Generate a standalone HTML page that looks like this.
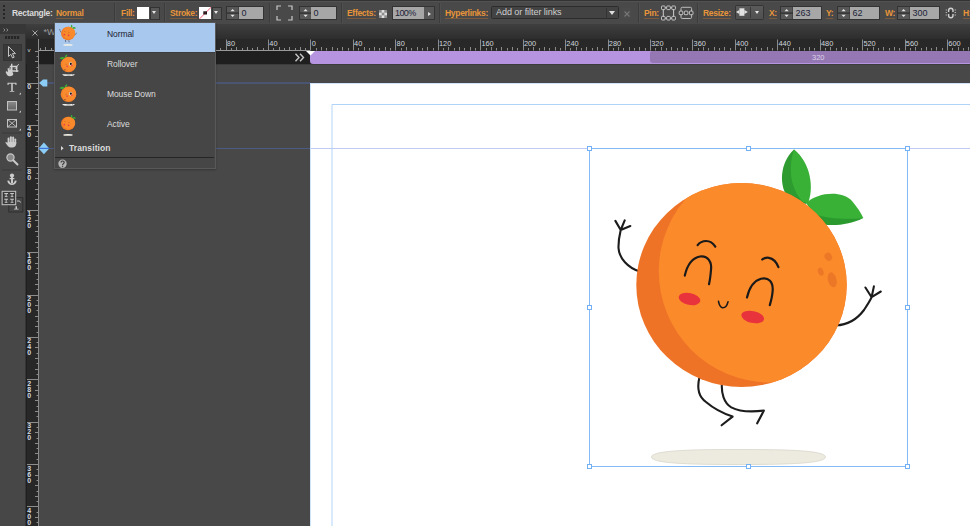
<!DOCTYPE html>
<html><head><meta charset="utf-8">
<style>
*{margin:0;padding:0;box-sizing:border-box}
html,body{width:970px;height:526px;overflow:hidden;background:#484848;font-family:"Liberation Sans",sans-serif;position:relative}
.a{position:absolute}
.lbl{position:absolute;font-size:8.5px;font-weight:bold;color:#e8953a;top:7.9px;line-height:10px;white-space:nowrap;letter-spacing:-0.3px}
.lbl u{text-decoration:underline solid rgba(190,115,45,0.42);text-decoration-thickness:1px;text-underline-offset:1.5px}
.sep{position:absolute;top:3px;width:2px;height:20px;background:linear-gradient(90deg,#3c3c3c 50%,#4f4f4f 50%)}
.spin{position:absolute;top:7px;width:12px;height:13px;background:#3e3e3e;border:1px solid #303030}
.spin:before{content:"";position:absolute;left:2px;top:1.5px;border-left:3.5px solid transparent;border-right:3.5px solid transparent;border-bottom:3.5px solid #d0d0d0}
.spin:after{content:"";position:absolute;left:2px;top:6.5px;border-left:3.5px solid transparent;border-right:3.5px solid transparent;border-top:3.5px solid #d0d0d0}
.inp{position:absolute;top:6px;height:14px;background:#a7a7a7;color:#1c2338;font-size:9px;line-height:12px;padding-left:2.5px;border:1px solid #333;border-left:0}
.dd{position:absolute;top:6px;height:14px;background:#575757;border:1px solid #333}
.dd:after{content:"";position:absolute;left:1.6px;top:3.6px;border-left:2.5px solid transparent;border-right:2.5px solid transparent;border-top:3.7px solid #e6e6e6}
.rt{position:absolute;font-size:7.4px;color:#cfd5dc;line-height:8px;top:40px}
.mi{position:absolute;left:107px;font-size:8.5px;color:#dcdcdc;line-height:10px;letter-spacing:-0.1px}
</style></head><body>

<!-- toolbar -->
<div class="a" style="left:0;top:0;width:970px;height:24px;background:#494949;border-top:1px solid #333"></div><div class="a" style="left:0;top:1px;width:970px;height:1px;background:#525252"></div>
<div class="a" style="left:3px;top:5px;width:2px;height:14px;border-left:2px dotted #262626"></div>
<div class="lbl" style="left:12px;color:#dadada">Rectangle:</div>
<div class="lbl" style="left:56px"><u>Normal</u></div>
<div class="sep" style="left:114px"></div>
<div class="lbl" style="left:121px"><u>Fill:</u></div>
<div class="a" style="left:136.7px;top:6.8px;width:12.4px;height:12.4px;background:#fff"></div>
<div class="dd" style="left:149.5px;top:6.5px;width:10px;height:13px"></div>
<div class="sep" style="left:164px"></div>
<div class="lbl" style="left:170px"><u>Stroke:</u></div>
<div class="a" style="left:199px;top:6.8px;width:12.3px;height:12.4px;background:#fff;overflow:hidden"><svg width="12" height="12" style="position:absolute;left:0;top:0"><line x1="0" y1="12.4" x2="12.4" y2="0" stroke="#f04a60" stroke-width="0.9"/><rect x="4.3" y="4.3" width="3.7" height="3.2" fill="#1a1a1a"/><rect x="5.5" y="5.3" width="1.4" height="1.2" fill="#7a1a2a"/></svg></div>
<div class="dd" style="left:211.5px;top:6.5px;width:10px;height:13px"></div>
<svg class="a" style="left:226px;top:6px" width="13" height="14"><rect width="13" height="14" fill="#333"/><rect x="1" y="1" width="11.5" height="5.4" fill="#585858"/><rect x="1" y="7.8" width="11.5" height="5.2" fill="#585858"/><path d="M4.5 5.3L6.6 3L8.7 5.3ZM4.5 8.8L6.6 11.1L8.7 8.8Z" fill="#e6e6e6"/></svg>
<div class="inp" style="left:239px;width:25px">0</div>
<div class="sep" style="left:269px"></div>
<svg class="a" style="left:276px;top:5px" width="17" height="16"><g fill="none" stroke="#c8c8c8" stroke-width="1.2"><path d="M1 5V1H5M12 1H16V5M16 11V15H12M5 15H1V11"/></g></svg>
<svg class="a" style="left:299px;top:6px" width="13" height="14"><rect width="13" height="14" fill="#333"/><rect x="1" y="1" width="11.5" height="5.4" fill="#585858"/><rect x="1" y="7.8" width="11.5" height="5.2" fill="#585858"/><path d="M4.5 5.3L6.6 3L8.7 5.3ZM4.5 8.8L6.6 11.1L8.7 8.8Z" fill="#e6e6e6"/></svg>
<div class="inp" style="left:311px;width:26px">0</div>
<div class="sep" style="left:341px"></div>
<div class="lbl" style="left:347px"><u>Effects:</u></div>
<svg class="a" style="left:379px;top:10px" width="8" height="8"><rect width="8" height="8" fill="#dedede"/><g fill="#8c8c8c"><rect x="0" y="0" width="2.7" height="2.7"/><rect x="5.3" y="0" width="2.7" height="2.7"/><rect x="2.7" y="2.7" width="2.7" height="2.7"/><rect x="0" y="5.3" width="2.7" height="2.7"/><rect x="5.3" y="5.3" width="2.7" height="2.7"/></g></svg>
<div class="inp" style="left:393px;width:31px;padding-left:2px;letter-spacing:-0.6px;border-right:0">100%</div>
<div class="a" style="left:424px;top:6px;width:11px;height:14px;background:#575757;border:1px solid #333;border-left:0"><div class="a" style="left:3.5px;top:4.5px;border-top:2px solid transparent;border-bottom:2px solid transparent;border-left:3.5px solid #e0e0e0"></div></div>
<div class="a" style="left:392px;top:6px;width:1px;height:14px;background:#333"></div>
<div class="sep" style="left:439px"></div>
<div class="lbl" style="left:445px"><u>Hyperlinks:</u></div>
<div class="a" style="left:491px;top:6.2px;width:127.5px;height:13.2px;background:#434343;border:1px solid #2c2c2c;border-radius:1.5px;color:#cfcfcf;font-size:9px;line-height:11px;padding-left:4px;letter-spacing:-0.05px">Add or filter links</div>
<div class="a" style="left:606px;top:8px;width:1px;height:11px;background:#333"></div>
<div class="a" style="left:609px;top:11px;border-left:3px solid transparent;border-right:3px solid transparent;border-top:4px solid #e0e0e0"></div>
<div class="a" style="left:622px;top:8px;width:9px;height:10px;background:#4b4b4b"></div><svg class="a" style="left:624px;top:10.5px" width="6" height="6"><path d="M0.5 0.5L5.5 5.5M5.5 0.5L0.5 5.5" stroke="#777" stroke-width="1.1"/></svg>
<div class="sep" style="left:638px"></div>
<div class="lbl" style="left:644px"><u>Pin:</u></div>
<svg class="a" style="left:660px;top:5px" width="17" height="16"><g fill="none" stroke="#cdcdcd" stroke-width="1"><path d="M3.3 4.5V11.5M13.6 4.5V11.5M5 2.8H6.8M10.3 2.8H12M5 13.2H6.8M10.3 13.2H12"/></g><g fill="#424242" stroke="#d2d2d2" stroke-width="0.9"><rect x="1.5" y="1" width="3.6" height="3.6" rx="0.8"/><rect x="6.7" y="1" width="3.6" height="3.6" rx="0.8"/><rect x="11.8" y="1" width="3.6" height="3.6" rx="0.8"/><rect x="1.5" y="11.4" width="3.6" height="3.6" rx="0.8"/><rect x="6.7" y="11.4" width="3.6" height="3.6" rx="0.8"/><rect x="11.8" y="11.4" width="3.6" height="3.6" rx="0.8"/></g></svg>
<svg class="a" style="left:678px;top:5px" width="17" height="16"><rect x="3" y="2.3" width="10.6" height="11.2" rx="1.2" fill="none" stroke="#bcbcbc" stroke-width="1"/><g fill="#424242" stroke="#d2d2d2" stroke-width="0.9"><rect x="1.2" y="6.1" width="3.6" height="3.6" rx="0.8"/><rect x="6.3" y="6.1" width="3.6" height="3.6" rx="0.8"/><rect x="11.4" y="6.1" width="3.6" height="3.6" rx="0.8"/></g></svg>
<div class="sep" style="left:697px"></div>
<div class="lbl" style="left:703px"><u>Resize:</u></div>
<div class="a" style="left:734.5px;top:5.3px;width:29px;height:15px;background:linear-gradient(#5a5a5a,#505050);border:1px solid #343434;border-radius:1.5px"></div>
<div class="a" style="left:750px;top:7px;width:1px;height:11px;background:#3a3a3a"></div>
<svg class="a" style="left:735px;top:8px" width="14" height="9"><g fill="#e2e2e2"><rect x="4.4" y="0.3" width="5" height="7.5"/><path d="M1 4.1L4.4 2.1V6.1Z"/><path d="M12.8 4.1L9.4 2.1V6.1Z"/></g></svg>
<div class="a" style="left:754.5px;top:10.8px;border-left:2.5px solid transparent;border-right:2.5px solid transparent;border-top:3.7px solid #e6e6e6"></div>
<div class="lbl" style="left:769px"><u>X:</u></div>
<svg class="a" style="left:780px;top:6px" width="13" height="14"><rect width="13" height="14" fill="#333"/><rect x="1" y="1" width="11.5" height="5.4" fill="#585858"/><rect x="1" y="7.8" width="11.5" height="5.2" fill="#585858"/><path d="M4.5 5.3L6.6 3L8.7 5.3ZM4.5 8.8L6.6 11.1L8.7 8.8Z" fill="#e6e6e6"/></svg>
<div class="inp" style="left:793px;width:29px">263</div>
<div class="lbl" style="left:826px"><u>Y:</u></div>
<svg class="a" style="left:837px;top:6px" width="13" height="14"><rect width="13" height="14" fill="#333"/><rect x="1" y="1" width="11.5" height="5.4" fill="#585858"/><rect x="1" y="7.8" width="11.5" height="5.2" fill="#585858"/><path d="M4.5 5.3L6.6 3L8.7 5.3ZM4.5 8.8L6.6 11.1L8.7 8.8Z" fill="#e6e6e6"/></svg>
<div class="inp" style="left:850px;width:30px">62</div>
<div class="lbl" style="left:885px"><u>W:</u></div>
<svg class="a" style="left:897px;top:6px" width="13" height="14"><rect width="13" height="14" fill="#333"/><rect x="1" y="1" width="11.5" height="5.4" fill="#585858"/><rect x="1" y="7.8" width="11.5" height="5.2" fill="#585858"/><path d="M4.5 5.3L6.6 3L8.7 5.3ZM4.5 8.8L6.6 11.1L8.7 8.8Z" fill="#e6e6e6"/></svg>
<div class="inp" style="left:910px;width:30px">300</div>
<svg class="a" style="left:944px;top:6px" width="13" height="14"><g fill="none" stroke="#cfcfcf" stroke-width="1.4"><path d="M4.6 6V4.5C4.6 3 5.3 2.3 6.8 2.3C8.3 2.3 9 3 9 4.5V6M4.6 8V9.5C4.6 11 5.3 11.7 6.8 11.7C8.3 11.7 9 11 9 9.5V8"/></g><path d="M6.8 4.5V9.5" stroke="#2a2a2a" stroke-width="1"/><g stroke="#bdbdbd" stroke-width="0.9"><path d="M1.7 4H3M1.7 6.5H3M1.7 9H3M10.6 4H12M10.6 6.5H12M10.6 9H12"/></g></svg>
<div class="lbl" style="left:963px"><u>H:</u></div>

<!-- tabs -->
<div class="a" style="left:0;top:24px;width:970px;height:15px;background:linear-gradient(#3f3f3f,#3a3a3a 30%,#2d2d2d)"></div>
<div class="a" style="left:0;top:24px;width:26px;height:10px;background:#373737"></div>
<svg class="a" style="left:3px;top:28px" width="6" height="4"><path d="M0.5 0.5L2 2L0.5 3.5M3.5 0.5L5 2L3.5 3.5" fill="none" stroke="#9a9a9a" stroke-width="0.8"/></svg>
<svg class="a" style="left:32px;top:30px" width="6" height="6"><path d="M0.5 0.5L5.5 5.5M5.5 0.5L0.5 5.5" stroke="#b4b4b4" stroke-width="0.9"/></svg>
<div class="a" style="left:43.5px;top:28px;font-size:9px;line-height:9px;color:#9c9c9c">*W</div>

<div class="a" style="left:0;top:34px;width:25px;height:492px;background:#474747"></div>
<div class="a" style="left:25px;top:34px;width:1px;height:492px;background:#353535"></div>
<svg class="a" style="left:5px;top:36px" width="15" height="3"><g fill="#262626"><rect x="0" y="0" width="2.2" height="3"/><rect x="3" y="0" width="2.2" height="3"/><rect x="6" y="0" width="2.2" height="3"/><rect x="9" y="0" width="2.2" height="3"/><rect x="12" y="0" width="2.2" height="3"/></g></svg>
<div class="a" style="left:3px;top:44px;width:19px;height:17px;background:#393939;border:1px solid #343434"></div>
<svg class="a" style="left:0;top:40px" width="26" height="180">
 <g fill="none" stroke="#c4c4c4" stroke-width="1" stroke-linejoin="round">
  <path d="M8.5 6.5V16.5L10.8 14.3L12.6 18L14.2 17.2L12.5 13.6H15.5Z" fill="#3a3a3a"/>
 </g>
 <g fill="none" stroke="#d0d0d0" stroke-width="1.4"><path d="M11.7 23.8V31H18.4M9.8 26.5H16.7V32"/><path d="M14.6 29.2L18.8 24.1" stroke-width="0.9"/></g>
 <path d="M5.8 32.5C5.5 31.5 6.5 31 7.2 31.6L8 32.3L7.6 28.8C7.5 28 8.6 27.8 8.8 28.6L9.4 30.6L9.3 27.8C9.3 27 10.4 27 10.5 27.8L10.8 30.2L11.2 28.5C11.4 27.8 12.4 28 12.3 28.8L12.2 31.5C12.8 32.5 13.4 33.6 13.2 34.6C12.8 36 11.2 36.4 9.6 36.3C7.9 36.2 6.6 34.8 5.8 32.5Z" fill="#cfcfcf"/>
 <path d="M7.5 42.7H16.5V45H15.5L15.2 43.8H12.8V51H14.3V51.8H9.7V51H11.2V43.8H8.8L8.5 45H7.5Z" fill="#c9c9c9"/>
 <path d="M19 54.5L21 52.5V54.5Z" fill="#d0d0d0"/>
 <defs><linearGradient id="rg" x1="0" y1="0" x2="0" y2="1"><stop offset="0" stop-color="#8c8c8c"/><stop offset="1" stop-color="#626262"/></linearGradient></defs><rect x="7.5" y="61.5" width="9" height="8.5" fill="url(#rg)" stroke="#c2c2c2"/>
 <path d="M19 72.5L21 70.5V72.5Z" fill="#d0d0d0"/>
 <rect x="7.5" y="79.5" width="9" height="7.5" fill="none" stroke="#c2c2c2"/>
 <path d="M7.5 79.5L16.5 87M16.5 79.5L7.5 87" stroke="#c2c2c2" stroke-width="0.9"/>
 <path d="M19 90.5L21 88.5V90.5Z" fill="#d0d0d0"/>
 <rect x="2" y="92.5" width="20" height="1" fill="#3a3a3a"/>
 <g fill="#cbcbcb"><rect x="7.6" y="97.6" width="1.9" height="7" rx="0.95"/><rect x="9.9" y="96.2" width="1.9" height="7" rx="0.95"/><rect x="12.2" y="96.6" width="1.9" height="7" rx="0.95"/><rect x="14.4" y="98.4" width="1.8" height="6" rx="0.9"/><path d="M7.6 102H16.2V104C16.2 106 14.6 107.4 12.2 107.4H10.5C9 107.4 8.2 106.5 7.4 105.5L5.6 103C5.2 102.4 5.8 101.8 6.4 102.2L7.6 103Z"/></g>
 <circle cx="10.5" cy="117.5" r="3.6" fill="#8a8a8a" stroke="#c9c9c9" stroke-width="1.2"/>
 <path d="M13.2 120.2L17.5 124.5" stroke="#c9c9c9" stroke-width="2" stroke-linecap="round"/>
 <rect x="2" y="129.5" width="20" height="1" fill="#3a3a3a"/>
 <g fill="#cbcbcb"><circle cx="12" cy="135.6" r="2.1"/><rect x="9.6" y="138" width="4.8" height="1.2"/><rect x="11" y="136.5" width="2" height="7"/><path d="M7.2 140.8L9.2 140.4C9.8 142.6 10.8 143.4 12 143.5C13.2 143.4 14.2 142.6 14.8 140.4L16.8 140.8C16 144 14.3 145 12 145C9.7 145 8 144 7.2 140.8Z"/></g>
 <rect x="8.8" y="157.5" width="14" height="14.5" fill="#454545" stroke="#303030"/>
 <path d="M17 161H19.5L20.5 162.5" stroke="#c9c9c9" fill="none" stroke-width="1"/>
 <path d="M14 168.8H18.6V169.6H14ZM15.5 166.3H17V168.8H15.5Z" fill="#c9c9c9"/>
 <rect x="2.1" y="151.3" width="13.6" height="13.4" fill="#464646" stroke="#c4c4c4" stroke-width="1"/>
 <rect x="3.5" y="152.7" width="10.8" height="10.6" fill="none" stroke="#333" stroke-width="0.8"/>
 <g fill="#c8c8c8"><path d="M4.3 153H8V154H6.6V156.3H7.5V157H4.8V156.3H5.7V154H4.3Z"/><path d="M10.2 153H13.9V154H12.5V156.3H13.4V157H10.7V156.3H11.6V154H10.2Z"/><path d="M4.3 158.8H8V159.8H6.6V162H7.5V162.7H4.8V162H5.7V159.8H4.3Z"/><path d="M10.2 158.8H13.9V159.8H12.5V162H13.4V162.7H10.7V162H11.6V159.8H10.2Z"/></g>
</svg>

<svg class="a" style="left:0;top:0" width="970" height="526">
<rect x="26" y="39" width="944" height="12" fill="#282828"/>
<rect x="26" y="39" width="13" height="487" fill="#282828"/>
<rect x="39" y="51" width="931" height="13" fill="#1f1f1f"/>
<rect x="26" y="64" width="1" height="462" fill="#1f1f1f"/>
<path d="M40.5 48V50.5 M45.5 47V50.5 M51.5 48V50.5 M56.5 39.5V50.5 M61.5 48V50.5 M66.5 47V50.5 M72.5 48V50.5 M77.5 47V50.5 M82.5 48V50.5 M88.5 47V50.5 M93.5 48V50.5 M98.5 39.5V50.5 M104.5 48V50.5 M109.5 47V50.5 M114.5 48V50.5 M120.5 47V50.5 M125.5 48V50.5 M130.5 47V50.5 M135.5 48V50.5 M141.5 39.5V50.5 M146.5 48V50.5 M151.5 47V50.5 M157.5 48V50.5 M162.5 47V50.5 M167.5 48V50.5 M173.5 47V50.5 M178.5 48V50.5 M183.5 39.5V50.5 M188.5 48V50.5 M194.5 47V50.5 M199.5 48V50.5 M204.5 47V50.5 M210.5 48V50.5 M215.5 47V50.5 M220.5 48V50.5 M226.5 39.5V50.5 M231.5 48V50.5 M236.5 47V50.5 M242.5 48V50.5 M247.5 47V50.5 M252.5 48V50.5 M257.5 47V50.5 M263.5 48V50.5 M268.5 39.5V50.5 M273.5 48V50.5 M279.5 47V50.5 M284.5 48V50.5 M289.5 47V50.5 M295.5 48V50.5 M300.5 47V50.5 M305.5 48V50.5 M310.5 39.5V50.5 M316.5 48V50.5 M321.5 47V50.5 M326.5 48V50.5 M332.5 47V50.5 M337.5 48V50.5 M342.5 47V50.5 M348.5 48V50.5 M353.5 39.5V50.5 M358.5 48V50.5 M364.5 47V50.5 M369.5 48V50.5 M374.5 47V50.5 M379.5 48V50.5 M385.5 47V50.5 M390.5 48V50.5 M395.5 39.5V50.5 M401.5 48V50.5 M406.5 47V50.5 M411.5 48V50.5 M417.5 47V50.5 M422.5 48V50.5 M427.5 47V50.5 M433.5 48V50.5 M438.5 39.5V50.5 M443.5 48V50.5 M448.5 47V50.5 M454.5 48V50.5 M459.5 47V50.5 M464.5 48V50.5 M470.5 47V50.5 M475.5 48V50.5 M480.5 39.5V50.5 M486.5 48V50.5 M491.5 47V50.5 M496.5 48V50.5 M501.5 47V50.5 M507.5 48V50.5 M512.5 47V50.5 M517.5 48V50.5 M523.5 39.5V50.5 M528.5 48V50.5 M533.5 47V50.5 M539.5 48V50.5 M544.5 47V50.5 M549.5 48V50.5 M555.5 47V50.5 M560.5 48V50.5 M565.5 39.5V50.5 M570.5 48V50.5 M576.5 47V50.5 M581.5 48V50.5 M586.5 47V50.5 M592.5 48V50.5 M597.5 47V50.5 M602.5 48V50.5 M608.5 39.5V50.5 M613.5 48V50.5 M618.5 47V50.5 M623.5 48V50.5 M629.5 47V50.5 M634.5 48V50.5 M639.5 47V50.5 M645.5 48V50.5 M650.5 39.5V50.5 M655.5 48V50.5 M661.5 47V50.5 M666.5 48V50.5 M671.5 47V50.5 M677.5 48V50.5 M682.5 47V50.5 M687.5 48V50.5 M692.5 39.5V50.5 M698.5 48V50.5 M703.5 47V50.5 M708.5 48V50.5 M714.5 47V50.5 M719.5 48V50.5 M724.5 47V50.5 M730.5 48V50.5 M735.5 39.5V50.5 M740.5 48V50.5 M745.5 47V50.5 M751.5 48V50.5 M756.5 47V50.5 M761.5 48V50.5 M767.5 47V50.5 M772.5 48V50.5 M777.5 39.5V50.5 M783.5 48V50.5 M788.5 47V50.5 M793.5 48V50.5 M799.5 47V50.5 M804.5 48V50.5 M809.5 47V50.5 M814.5 48V50.5 M820.5 39.5V50.5 M825.5 48V50.5 M830.5 47V50.5 M836.5 48V50.5 M841.5 47V50.5 M846.5 48V50.5 M852.5 47V50.5 M857.5 48V50.5 M862.5 39.5V50.5 M867.5 48V50.5 M873.5 47V50.5 M878.5 48V50.5 M883.5 47V50.5 M889.5 48V50.5 M894.5 47V50.5 M899.5 48V50.5 M905.5 39.5V50.5 M910.5 48V50.5 M915.5 47V50.5 M921.5 48V50.5 M926.5 47V50.5 M931.5 48V50.5 M936.5 47V50.5 M942.5 48V50.5 M947.5 39.5V50.5 M952.5 48V50.5 M958.5 47V50.5 M963.5 48V50.5 M968.5 47V50.5" stroke="#8c8c8c" stroke-width="1"/>
<path d="M39 50.5H310" stroke="#9a9a9a" stroke-width="1"/>
<path d="M38.5 39V526" stroke="#8c8c8c" stroke-width="1"/>
<path d="M35 51.5H39 M36.5 56.5H39 M35 61.5H39 M36.5 67.5H39 M35 72.5H39 M36.5 77.5H39 M27 83.5H39 M36.5 88.5H39 M35 93.5H39 M36.5 98.5H39 M35 104.5H39 M36.5 109.5H39 M35 114.5H39 M36.5 120.5H39 M27 125.5H39 M36.5 130.5H39 M35 136.5H39 M36.5 141.5H39 M35 146.5H39 M36.5 151.5H39 M35 157.5H39 M36.5 162.5H39 M27 167.5H39 M36.5 173.5H39 M35 178.5H39 M36.5 183.5H39 M35 189.5H39 M36.5 194.5H39 M35 199.5H39 M36.5 204.5H39 M27 210.5H39 M36.5 215.5H39 M35 220.5H39 M36.5 226.5H39 M35 231.5H39 M36.5 236.5H39 M35 242.5H39 M36.5 247.5H39 M27 252.5H39 M36.5 257.5H39 M35 263.5H39 M36.5 268.5H39 M35 273.5H39 M36.5 279.5H39 M35 284.5H39 M36.5 289.5H39 M27 295.5H39 M36.5 300.5H39 M35 305.5H39 M36.5 310.5H39 M35 316.5H39 M36.5 321.5H39 M35 326.5H39 M36.5 332.5H39 M27 337.5H39 M36.5 342.5H39 M35 347.5H39 M36.5 353.5H39 M35 358.5H39 M36.5 363.5H39 M35 369.5H39 M36.5 374.5H39 M27 379.5H39 M36.5 385.5H39 M35 390.5H39 M36.5 395.5H39 M35 400.5H39 M36.5 406.5H39 M35 411.5H39 M36.5 416.5H39 M27 422.5H39 M36.5 427.5H39 M35 432.5H39 M36.5 438.5H39 M35 443.5H39 M36.5 448.5H39 M35 453.5H39 M36.5 459.5H39 M27 464.5H39 M36.5 469.5H39 M35 475.5H39 M36.5 480.5H39 M35 485.5H39 M36.5 491.5H39 M35 496.5H39 M36.5 501.5H39 M27 506.5H39 M36.5 512.5H39 M35 517.5H39 M36.5 522.5H39" stroke="#8c8c8c" stroke-width="1"/>
</svg>
<div class="rt" style="left:57.1px">240</div>
<div class="rt" style="left:99.5px">200</div>
<div class="rt" style="left:141.9px">160</div>
<div class="rt" style="left:184.4px">120</div>
<div class="rt" style="left:226.8px">80</div>
<div class="rt" style="left:269.3px">40</div>
<div class="rt" style="left:311.7px">0</div>
<div class="rt" style="left:354.1px">40</div>
<div class="rt" style="left:396.6px">80</div>
<div class="rt" style="left:439.0px">120</div>
<div class="rt" style="left:481.4px">160</div>
<div class="rt" style="left:523.9px">200</div>
<div class="rt" style="left:566.3px">240</div>
<div class="rt" style="left:608.8px">280</div>
<div class="rt" style="left:651.2px">320</div>
<div class="rt" style="left:693.6px">360</div>
<div class="rt" style="left:736.1px">400</div>
<div class="rt" style="left:778.5px">440</div>
<div class="rt" style="left:821.0px">480</div>
<div class="rt" style="left:863.4px">520</div>
<div class="rt" style="left:905.8px">560</div>
<div class="rt" style="left:948.3px">600</div>
<div class="a" style="left:27.3px;top:83.7px;font-size:7px;line-height:6px;color:#d3d9e0;font-weight:bold">0</div>
<div class="a" style="left:27.3px;top:126.1px;font-size:7px;line-height:6px;color:#d3d9e0;font-weight:bold">4</div>
<div class="a" style="left:27.3px;top:132.1px;font-size:7px;line-height:6px;color:#d3d9e0;font-weight:bold">0</div>
<div class="a" style="left:27.3px;top:168.6px;font-size:7px;line-height:6px;color:#d3d9e0;font-weight:bold">8</div>
<div class="a" style="left:27.3px;top:174.5px;font-size:7px;line-height:6px;color:#d3d9e0;font-weight:bold">0</div>
<div class="a" style="left:27.3px;top:211.0px;font-size:7px;line-height:6px;color:#d3d9e0;font-weight:bold">1</div>
<div class="a" style="left:27.3px;top:217.0px;font-size:7px;line-height:6px;color:#d3d9e0;font-weight:bold">2</div>
<div class="a" style="left:27.3px;top:222.9px;font-size:7px;line-height:6px;color:#d3d9e0;font-weight:bold">0</div>
<div class="a" style="left:27.3px;top:253.4px;font-size:7px;line-height:6px;color:#d3d9e0;font-weight:bold">1</div>
<div class="a" style="left:27.3px;top:259.4px;font-size:7px;line-height:6px;color:#d3d9e0;font-weight:bold">6</div>
<div class="a" style="left:27.3px;top:265.3px;font-size:7px;line-height:6px;color:#d3d9e0;font-weight:bold">0</div>
<div class="a" style="left:27.3px;top:295.9px;font-size:7px;line-height:6px;color:#d3d9e0;font-weight:bold">2</div>
<div class="a" style="left:27.3px;top:301.8px;font-size:7px;line-height:6px;color:#d3d9e0;font-weight:bold">0</div>
<div class="a" style="left:27.3px;top:307.8px;font-size:7px;line-height:6px;color:#d3d9e0;font-weight:bold">0</div>
<div class="a" style="left:27.3px;top:338.3px;font-size:7px;line-height:6px;color:#d3d9e0;font-weight:bold">2</div>
<div class="a" style="left:27.3px;top:344.3px;font-size:7px;line-height:6px;color:#d3d9e0;font-weight:bold">4</div>
<div class="a" style="left:27.3px;top:350.2px;font-size:7px;line-height:6px;color:#d3d9e0;font-weight:bold">0</div>
<div class="a" style="left:27.3px;top:380.8px;font-size:7px;line-height:6px;color:#d3d9e0;font-weight:bold">2</div>
<div class="a" style="left:27.3px;top:386.7px;font-size:7px;line-height:6px;color:#d3d9e0;font-weight:bold">8</div>
<div class="a" style="left:27.3px;top:392.7px;font-size:7px;line-height:6px;color:#d3d9e0;font-weight:bold">0</div>
<div class="a" style="left:27.3px;top:423.2px;font-size:7px;line-height:6px;color:#d3d9e0;font-weight:bold">3</div>
<div class="a" style="left:27.3px;top:429.1px;font-size:7px;line-height:6px;color:#d3d9e0;font-weight:bold">2</div>
<div class="a" style="left:27.3px;top:435.1px;font-size:7px;line-height:6px;color:#d3d9e0;font-weight:bold">0</div>
<div class="a" style="left:27.3px;top:465.6px;font-size:7px;line-height:6px;color:#d3d9e0;font-weight:bold">3</div>
<div class="a" style="left:27.3px;top:471.6px;font-size:7px;line-height:6px;color:#d3d9e0;font-weight:bold">6</div>
<div class="a" style="left:27.3px;top:477.5px;font-size:7px;line-height:6px;color:#d3d9e0;font-weight:bold">0</div>
<div class="a" style="left:27.3px;top:508.1px;font-size:7px;line-height:6px;color:#d3d9e0;font-weight:bold">4</div>
<div class="a" style="left:27.3px;top:514.0px;font-size:7px;line-height:6px;color:#d3d9e0;font-weight:bold">0</div>
<div class="a" style="left:27.3px;top:520.0px;font-size:7px;line-height:6px;color:#d3d9e0;font-weight:bold">0</div>
<div class="a" style="left:27.5px;top:47px;font-size:6px;line-height:6px;color:#cfd5dc">v</div>
<!-- purple bar -->
<div class="a" style="left:310px;top:51px;width:660px;height:13px;background:#b794e0;border-bottom-left-radius:3px"></div>
<div class="a" style="left:650px;top:51px;width:320px;height:12.3px;background:#9578b3;border-radius:2.5px 0 0 3px"></div>
<div class="a" style="left:812px;top:54px;font-size:7.5px;line-height:8px;color:#dcd2e8">320</div>
<svg class="a" style="left:306px;top:51px" width="9" height="5"><path d="M0 0H9L4.5 4.5Z" fill="#fff"/></svg>
<svg class="a" style="left:294px;top:53px" width="12" height="9"><path d="M1.5 0.8L5 4.5L1.5 8.2M6 0.8L9.5 4.5L6 8.2" fill="none" stroke="#c4c4c4" stroke-width="1.4"/></svg>
<div class="a" style="left:39px;top:64px;width:931px;height:1px;background:#3c3c3c"></div>
<!-- page -->
<div class="a" style="left:310px;top:83px;width:660px;height:443px;background:#fff"></div>
<svg class="a" style="left:0;top:0" width="970" height="526">
 <path d="M39 83H310" stroke="#4c62a0" stroke-width="1"/>
 <path d="M49 148.5H310" stroke="#4a5a82" stroke-width="1"/>
 <path d="M310 148.5H970" stroke="#c2caf4" stroke-width="1"/>
 <path d="M310.5 83V526M310 83.5H970" stroke="#cfe3fa" stroke-width="1"/>
 <path d="M332 526V104.5H970" fill="none" stroke="#b0d4f7" stroke-width="1"/>
 <path d="M39.2 83L43 79.5H47.3V86.5H43Z" fill="#8ccdf7"/>
 <path d="M43.9 142.5L49.2 148.4L43.9 154.3L38.6 148.4Z" fill="#8ccdf7"/>
 <path d="M39 148.4H49" stroke="#3f72d8" stroke-width="1.2"/>
</svg>

<svg class="a" style="left:0;top:0" width="970" height="526">
 <defs><clipPath id="body"><ellipse cx="741.5" cy="285" rx="105.2" ry="102"/></clipPath></defs>
 <path d="M651.5 457C651.5 449.8 700 449.5 738.5 449.5C777 449.5 825.5 449.8 825.5 457C825.5 464.2 777 464.5 738.5 464.5C700 464.5 651.5 464.2 651.5 457Z" fill="#edeae0" stroke="#d9d6ca" stroke-width="0.8"/>
 <path d="M794 149.4C780 162 778 186 789 199L806 204C814 190 810 163 794 149.4Z" fill="#2d9b2f"/>
 <path d="M794 149.4C788 168 790 188 803 202L808 203C814 188 811 163 794 149.4Z" fill="#39b136"/>
 <path d="M806 203C818 192 842 190 852 201C857 207 861 213 863.3 217.9C848 222 828 224 818 220Z" fill="#39b136"/>
 <path d="M812 213.5C830 219.5 850 219.5 863.3 217.9C850 225 830 227 816 223Z" fill="#2b9a2e"/>
 <g fill="none" stroke="#1c1c1c" stroke-width="2.1" stroke-linecap="round" stroke-linejoin="round">
  <path d="M640 271.5C628 268 619 258 618.5 248C618.3 240 619.5 235 620.7 230M620.7 230L615.4 220.9M620.7 230L624.7 220.4M620.7 230L630.3 226"/>
  <path d="M836 325.3C848 325 858 318 864 310C868 304 870.5 300 871.6 297.2M871.6 297.2L865.4 287.5M871.6 297.2L873.9 286.4M871.6 297.2L880.8 291.5"/>
  <path d="M699.3 378C697 388 699 397 706 402C713 408 722 413 732.6 416.6L721.6 425.3"/>
  <path d="M722 383C721 393 724 403 731.3 407.3C740 412 752 412 763.9 410.6L757.2 423.3"/>
 </g>
 <ellipse cx="741.5" cy="285" rx="105.2" ry="102" fill="#ee7327"/>
 <circle cx="770" cy="271.3" r="111.2" fill="#fb8a2b" clip-path="url(#body)"/>
 <g fill="#ec7727">
  <ellipse cx="828.3" cy="256.8" rx="3.6" ry="4.2" transform="rotate(-30 828.3 256.8)"/>
  <ellipse cx="820.7" cy="271.6" rx="2.8" ry="4.2" transform="rotate(-20 820.7 271.6)"/>
  <ellipse cx="832.2" cy="279.8" rx="4.3" ry="7.6" transform="rotate(-15 832.2 279.8)"/>
 </g>
 <g fill="#e8323c">
  <ellipse cx="689.5" cy="299" rx="11" ry="5.8" transform="rotate(12 689.5 299)"/>
  <ellipse cx="752.7" cy="317" rx="11.5" ry="6" transform="rotate(12 752.7 317)"/>
 </g>
 <g fill="none" stroke="#1a1a1a" stroke-width="2.2" stroke-linecap="round">
  <path d="M697.6 245.2C700 242 703 241 706.1 241C710 241 713 243 715.3 246.7"/>
  <path d="M684.8 275.6C687 266 692 258 700 256.5C708 255.5 712 262 711 270C710.5 276 710 280 709 284.2"/>
  <path d="M762.2 259.5C764 258 766.5 257.5 768.9 257.8C773 258.5 776.5 262 778.4 267.1"/>
  <path d="M747 297.5C749 289 753 281 761 278.8C769 277 773 282 772.7 290C772.5 296 771 301 769.8 305.1"/>
  <path d="M718.5 301.3C719 304 720 307 722.5 307.8C725 308 727 306 728 301.9" stroke-width="1.6"/>
 </g>
</svg>

<svg class="a" style="left:0;top:0" width="970" height="526">
 <rect x="589.5" y="148.5" width="318" height="318" fill="none" stroke="#84bbf6" stroke-width="1"/>
 <g fill="#fff" stroke="#74b0f4" stroke-width="1">
  <rect x="587.5" y="146.5" width="4" height="4"/><rect x="746.5" y="146.5" width="4" height="4"/><rect x="905.5" y="146.5" width="4" height="4"/>
  <rect x="587.5" y="305.5" width="4" height="4"/><rect x="905.5" y="305.5" width="4" height="4"/>
  <rect x="587.5" y="464.5" width="4" height="4"/><rect x="746.5" y="464.5" width="4" height="4"/><rect x="905.5" y="464.5" width="4" height="4"/>
 </g>
</svg>

<!-- dropdown panel -->
<div class="a" style="left:54px;top:22px;width:162px;height:147px;background:#464646;border:1px solid #585858;box-shadow:0 1px 2px rgba(0,0,0,0.25)"></div>
<div class="a" style="left:55px;top:23px;width:160px;height:29px;background:#a9c8ee"></div>
<div class="a" style="left:55px;top:52px;width:160px;height:1px;background:#3c3c3c"></div>
<div class="mi" style="left:107px;top:29.4px;color:#1a1c30">Normal</div>
<div class="mi" style="top:59.2px">Rollover</div>
<div class="mi" style="top:89.3px">Mouse Down</div>
<div class="mi" style="top:118.6px">Active</div>
<svg class="a" style="left:61px;top:145.6px" width="3" height="5"><path d="M0 0L2.6 2.2L0 4.4Z" fill="#d8d8d8"/></svg>
<div class="a" style="left:69px;top:143px;font-size:8.5px;line-height:10px;font-weight:bold;color:#dcdcdc;letter-spacing:0.1px">Transition</div>
<div class="a" style="left:55px;top:157px;width:159px;height:1px;background:#262626"></div>
<svg class="a" style="left:58px;top:159px" width="9" height="10"><circle cx="4.5" cy="4.8" r="4.2" fill="#b4b4b4"/><path d="M3 3.6C3 2.6 3.7 2 4.6 2C5.6 2 6.2 2.6 6.2 3.4C6.2 4.4 5 4.6 4.6 5.6V6.2" fill="none" stroke="#3a3a3a" stroke-width="1.2"/><circle cx="4.6" cy="7.6" r="0.7" fill="#3a3a3a"/></svg>
<svg class="a" style="left:0;top:0" width="220" height="170">
 <defs>
  <g id="thn">
   <ellipse cx="0" cy="11.4" rx="4.7" ry="0.9" fill="#f0f0e6"/>
   <path d="M-2.6 6.5L-2.2 8.6M0.8 6.8L1.2 8.8" stroke="#3a3a4a" stroke-width="0.6" fill="none"/>
   <path d="M-7 -1C-7.8 -2.5 -8.2 -3.5 -8.5 -4.5M6.8 1.5C7.6 1 8.3 0.2 8.6 -0.8" stroke="#4a4a55" stroke-width="0.6" fill="none"/>
   <ellipse cx="0" cy="0" rx="7" ry="6.8" fill="#f27a26"/>
   <ellipse cx="1" cy="-0.6" rx="6.2" ry="6.1" fill="#f88a2c"/>
   <path d="M3 -6.2C2.6 -8 3.2 -8.8 3.8 -8.7C4.6 -7.6 4.5 -6.5 3.9 -5.8Z" fill="#3aae36"/>
   <path d="M4.2 -5.6C5.2 -6.6 7 -6.8 8 -5.2C6.8 -4.4 5.2 -4.6 4.2 -5.6Z" fill="#38ac34"/>
   <g fill="#e8404a"><circle cx="-3.6" cy="1.1" r="0.9"/><circle cx="0.6" cy="1.8" r="0.9"/></g>
   <path d="M-3.8 -1.8Q-3 -2.8 -2.4 -1.6M0 -0.8Q0.8 -1.8 1.6 -0.6" stroke="#b85a20" stroke-width="0.5" fill="none"/>
  </g>
  <g id="thr">
   <path d="M-6.3 9.8H6.3C6 11.2 4 11.5 0 11.5C-4 11.5 -6 11.2 -6.3 9.8Z" fill="#eeeeea"/>
   <path d="M-2 10.6H2M3.5 10.4H4.6" stroke="#555" stroke-width="0.5"/>
   <circle cx="0" cy="0" r="7.8" fill="#f5812a"/>
   <circle cx="0.6" cy="-0.5" r="7" fill="#f98a2d"/>
   <path d="M-3.6 -6.8C-5.6 -8 -8 -7.5 -9 -6C-7.4 -4.8 -5.2 -5 -3.6 -6.8Z" fill="#36ac34"/>
   <path d="M-3.8 -7C-3.6 -8.8 -2.6 -9.8 -1.4 -10C-1 -8.4 -2 -7.2 -3.8 -7Z" fill="#3cb43a"/>
   <circle cx="2.1" cy="-0.6" r="1.7" fill="#f4f0ea"/>
   <circle cx="2.3" cy="-0.6" r="1.1" fill="#141414"/>
   <path d="M-3.2 -0.2H-1.6" stroke="#c36a2a" stroke-width="0.6"/>
   <g fill="#ee4a4a"><circle cx="-1.4" cy="1.8" r="0.9"/><circle cx="3.3" cy="0.8" r="0.9"/></g>
   <path d="M-4.2 5.4L-3 5.2" stroke="#7a3a1a" stroke-width="0.8"/>
  </g>
 </defs>
 <use href="#thn" x="68" y="33.5"/>
 <use href="#thr" x="68.5" y="64.5"/>
 <use href="#thr" x="68.5" y="94.3"/>
 <use href="#thn" x="68" y="123.5"/>
</svg>

</body></html>
